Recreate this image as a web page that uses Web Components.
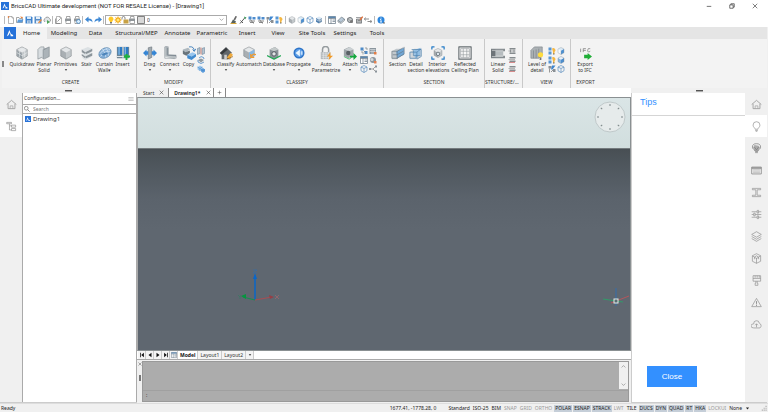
<!DOCTYPE html>
<html lang="en">
<head>
<meta charset="utf-8">
<title>BricsCAD Ultimate development</title>
<style>
html,body{margin:0;height:100%;background:#fff}
body{font-family:"Noto Sans","Open Sans",sans-serif;font-size:5px;line-height:7px;color:#333;overflow:hidden}
</style>
</head>
<body>
<cad-app></cad-app>
<script>
const box = (t, l, r) => `<path fill="${t}" d="M8 1 14 4 8 7.500 2 4z"/><path fill="${l}" d="M2 4 8 7.500V15L2 11.500z"/><path fill="${r}" d="M14 4 8 7.500V15l6-3.500z"/>`;
const grayBox = box('#e4e7e9', '#a9afb3', '#c3c8cb') + '<path fill="none" stroke="#777e83" stroke-width=".6" d="M8 1 14 4v7.500L8 15l-6-3.500V4z"/>';
const ln = (d, c = '#909090', w = 1) => `<path fill="none" stroke="${c}" stroke-width="${w}" stroke-linejoin="round" d="${d}"/>`;
const fl = (d, c) => `<path fill="${c}" d="${d}"/>`;
const sheet = fl('M3 1h7l3 3v11H3z', '#fff') + ln('M3 1h7l3 3v11H3zM10 1v3h3', '#888', 1.2);
const printer = ln('M5 5V1h7v4M4 11h9v4H4z', '#777', 1.3) + fl('M2 5h12v6H2z', '#909599') + fl('M5 10h7v4H5z', '#fff');
const bulb = fl('M8 1a5 5 0 0 0-3 9l1 2h4l1-2a5 5 0 0 0-3-9z', '#ffc928') + fl('M6 12h4v3H6z', '#777');
const house = fl('M1 8 8 1l7 7-2 1v6H3V9z', '#62676b') + fl('M1 8 8 2l2 2-7 6z', '#363a3d') + fl('M6 10h3v5H6z', '#ccc');
const icons = {
  logo: fl('M0 0h16v16H0z', '#2672d9') + fl('M3 13 7 3l3 8-2-1-1-3-1 4zM9 9l4 2v2H9z', '#fff'),
  new: sheet + fl('M1 2l2-2 2 2-2 2z', '#e9782f'),
  open: ln('M1 13V3h5l1 2h6v8z', '#777', 1.3) + fl('M4 7h11l-3 6H2z', '#599bdc') + fl('M8 1l6 1-2 3z', '#e87527'),
  save: fl('M1 1h12l2 2v12H1z', '#3f83ce') + fl('M4 1h8v5H4zM4 9h8v6H4z', '#d9e9f8') + ln('M5 11h6M5 13h6', '#4e80b7'),
  saveas: fl('M1 1h12l2 2v12H1z', '#568dc8') + fl('M4 1h8v5H4zM4 9h8v6H4z', '#e4edf7') + fl('M8 13l6-7 2 2-6 7z', '#e58b40'),
  cloud: fl('M4 12a4 4 0 0 1 0-7 5 5 0 0 1 9 0 4 4 0 0 1 0 7z', '#dfe4e8') + ln('M4 12a4 4 0 0 1 0-7 5 5 0 0 1 9 0 4 4 0 0 1 0 7', '#777', 1.3) + fl('M8 8l6 4-6 4z', '#4ca457'),
  layout: sheet + ln('M1 5v10h9M5 11l6-6', '#777', 1.4), print: printer, preview: printer + '<circle cx="11" cy="11" r="4" fill="#d7ecfb" stroke="#4683bb" stroke-width="1.5"/>',
  undo: fl('M0 7l7-6v4c6 0 8 3 8 8-2-3-4-4-8-4v4z', '#3e88d4'), redo: fl('M16 7 9 1v4c-6 0-8 3-8 8 2-3 4-4 8-4v4z', '#3e88d4'),
  bulb, sun: fl('M8 0l2 4 4-2-2 4 4 2-4 2 2 4-4-2-2 4-2-4-4 2 2-4-4-2 4-2-2-4 4 2z', '#f5ac18') + '<circle cx="8" cy="8" r="3" fill="#ffe67a"/>',
  lock: ln('M2 7V4a3 3 0 0 1 6 0v3', '#777', 1.7) + fl('M5 7h10v8H5z', '#c7a145'),
  swatch: fl('M1 1h14v14H1z', '#d8d8d8') + ln('M1 1h14v14H1z', '#555', 1.4),
  brush: fl('M11 0l3 1-4 8-3-2z', '#686868') + fl('M2 14 6 7l6 4-2 4z', '#56625f') + ln('M1 15h12', '#d3a336', 2),
  pen: ln('M2 15 13 2M3 9l5 5', '#555', 2) + fl('M10 1l5 2-3 4z', '#46a364'),
  filter: fl('M1 1h6v6H1zM9 2h6v5H9z', '#4d8cce') + ln('M2 10h12M4 13h8M5 7l6 8', '#777', 1.7),
  filter2: fl('M1 2h6v5H1zM10 8h5v6h-5z', '#898f94') + fl('M8 1h7L9 9H6z', '#3e86d0') + ln('M3 7v8M6 14l4-4', '#787878', 1.5),
  bulbs: fl('M1 1h6v6H1zM1 9h6v6H1z', '#5796d3') + fl('M8 3a4 4 0 1 1 5 7v4h-3v-4z', '#f5b742') + ln('M10 14h3', '#6b6b6b', 2),
  face: grayBox, vbox: box('#dcecf8', '#f8fbfd', '#4a90d4') + ln('M8 1 14 4v7.500L8 15l-6-3.500V4zM8 7v8', '#8b99a4', .8),
  bbox: box('#e9f2fa', '#87b5df', '#4b8dce') + ln('M8 1 14 4v7.500L8 15l-6-3.500V4z', '#768696', .8),
  wbox: ln('M8 1 14 4v7.500L8 15l-6-3.500V4zM2 4l6 3 6-3M8 7v8', '#5186bb', 1.3), darkbox: box('#dae8f4', '#4f7eae', '#7897b4') + ln('M2 7l6 3 6-3', '#fff'),
  grid: fl('M1 1h14v14H1z', '#fff') + ln('M1 1h14v14H1zM1 5h14M6 5v10M9 8h5M9 11h5', '#596b7a', 1.3) + fl('M1 1h14v3H1z', '#5b86ae'),
  erase: fl('M2 9l7-7 6 4-7 7z', '#b9c9d8') + ln('M2 9l7-7 6 4-7 7zM2 9v3l6 3 7-6V6', '#606b75', 1.2),
  gear: '<circle cx="8" cy="8" r="5" fill="#c7cacc" stroke="#6f757a" stroke-width="2"/><circle cx="11" cy="11" r="3" fill="#777"/>' + ln('M2 4l11 9', '#777'),
  tool: fl('M2 6h12v9H2z', '#b4b7b9') + ln('M2 3h12M3 6h10v8H3zM6 9h5', '#6d7174', 1.3) + fl('M9 6l6-6 1 3-5 6z', '#dc7240'),
  swap: ln('M1 6h9M3 3 1 6l2 3M7 11h8M13 8l2 3-2 3', '#727272', 1.6), help: '<circle cx="8" cy="8" r="7" fill="#2d86dc"/><circle cx="8" cy="4" r="1.200" fill="#fff"/>' + ln('M6 7h2v5M6 12h4', '#fff', 1.6) + fl('M12 13h4l-2 3z', '#333'),
  quick: grayBox + fl('M3 6l5 3v5l-5-3z', '#919ba2') + ln('M2 7.500 8 11l6-3.500M5 2.500 11 6v7M11 2.500 5 6v7', '#e9edef', .7),
  planar: fl('M1 4l3-3h4l-1 12-6 2z', '#d8dde0') + fl('M7 3l7-2v11l-7 3z', '#abb3b8') + ln('M1 4l3-3h4v3l6-3v11l-6 3-3-2-4 2zM7 4v10', '#737d83', .6),
  prim: grayBox,
  stair: fl('M2 4l7-3 5 2-8 4zM2 9l7-3 5 2-8 4zM2 13l6-2 6 1-8 4z', '#dce1e4') + fl('M2 4l4 3v2L2 7zM2 9l4 3v2l-4-3zM6 7l8-4v3l-7 3zM6 12l8-4v3l-7 3z', '#8c959b'),
  curtain: '<ellipse cx="8" cy="8" rx="7.500" ry="5.500" transform="rotate(-32 8 8)" fill="#82aed8" stroke="#5983a9" stroke-width=".7"/>' + ln('M2 9q6-8 12-5M3 12q5-7 11-6M5 3q3 4 4 10M9 2q3 4 3 9', '#dbeaf6', .8) + fl('M4 10q4-4 8-2l-5 3z', '#4c84ba'),
  insert: fl('M1 1h14v13H1z', '#718693') + fl('M2 1h5v9H2zM9 1h5v9H9z', '#2d7bc3') + fl('M3 1h1v9H3zM10 1h1v9h-1z', '#b8d6ec') + ln('M8 1v14M1 12h13', '#e1e7eb', 1.2) + ln('M12 9v7M9 12h7', '#19b53d', 2.2),
  drag: fl('M6 2l4-1v12l-4 2z', '#9fa8ae') + ln('M6 2l4-1v12l-4 2z', '#677079', .7) + fl('M0 8l4-4v2h2v4H4v2zM16 8l-4-4v2h-2v4h2v2z', '#3585d4'),
  connect: fl('M2 1l3-1v10l10 2-2 3-11-3z', '#c1c7ca') + fl('M4 1l2 1v8l-2 1zM5 10h10v2L5 11z', '#8c969d') + ln('M2 1l3-1 1 1v9l9 1v3H2z', '#79838a', .6),
  copy: fl('M1 4l6-2 2 2-5 4-3-1z', '#aeb8be') + fl('M1 5l3 2 5-2v3l-4 3-4-2z', '#69747b') + fl('M6 10l6-3 4 2-5 3z', '#98c6ef') + fl('M6 10l5 2v4l-5-2zM11 12l5-3v3l-5 4z', '#418bcf') + ln('M8 1q6-1 6 5M12 4l2 2 2-3', '#3478b9', 1),
  classify: house + fl('M9 13l4-5 3 2-4 5z', '#f0aa3b') + ln('M9 15l7-3', '#986420', .8),
  auto: grayBox + fl('M8 7.500 14 4v7L8 15z', '#86b8e4') + ln('M11 12q1-4 5-2M10 9v4h4', '#f09a2f', 1.4),
  database: fl('M3 4l6-3 4 3v8l-5 3-5-3z', '#8a9297') + fl('M3 4l6-3 4 3-5 2z', '#c4caca') + '<circle cx="8" cy="9" r="2.500" fill="#e1e4e5" stroke="#495158"/>' + ln('M0 11l8 4 8-4', '#25a756', 1.3),
  propagate: '<circle cx="8" cy="8" r="6.300" fill="#2d74c8"/><circle cx="8" cy="8" r="4.500" fill="#5f9fe8"/>' + fl('M4 8l5-4v8z', '#eaf6ff') + fl('M10 6h2v4h-2z', '#c5defa'),
  param: ln('M4 7V4a3 3 0 0 1 7 0v3', '#969c9f', 1.7) + fl('M2 7h11v8H2z', '#b5babd') + ln('M3 9h9M3 11h9M3 13h9M5 7v8M8 7v8M11 7v8', '#ebeded', .6) + fl('M13 7 9 12h3l-1 4 5-5h-3z', '#f39a25'),
  attach: fl('M1 4l6-3 5 3v7l-6 3-5-3z', '#9da4a8') + fl('M2 4l6-3 4 3-5 2z', '#ccd1d4') + '<circle cx="6" cy="8" r="2.500" fill="#596165"/>' + ln('M1 12l6 3 3-2', '#4cba6e', 1.1) + fl('M8 11h4V8l4 4-4 4v-3H8z', '#13a73c'),
  section: fl('M1 6l5-3h8l-3 4v5l-5 3H1z', '#c1c8cd') + fl('M6 6l9-4v8l-8 4z', '#70a7d7') + ln('M1 6h6l7-4M1 6v8h6l8-5V1M7 6v9M2 10h5l7-4', '#64717b', .7),
  detail: fl('M1 7l5-4h8v8l-4 4H1z', '#d1d6da') + fl('M5 5l8-3v8l-6 4z', '#92bee3') + ln('M1 7h8l5-4M1 7v7h8V7M3 4h11v8l-5 3M5 5v6h8', '#4e82af', .8),
  interior: '<g transform="translate(2 2) scale(.75)">' + grayBox + '</g><circle cx="8" cy="9" r="2" fill="#dce6ec" stroke="#69747b"/>' + ln('M1 4V1h3M12 1h3v3M1 12v3h3M12 15h3v-3', '#267cc7', 1.4),
  ceiling: fl('M1 1h14v14H1z', '#f8f8f8') + ln('M1 1h14v14H1z', '#666d71', 1.3) + ln('M3 3h10v10H3zM6 3v10M10 3v10M3 6h10M3 10h10', '#91979a', .7),
  linear: fl('M0 3h16v3H0zM0 11h16v3H0z', '#858c90') + fl('M2 6h12v5H2z', '#b6bcbf') + fl('M0 4h5v9H0z', '#6d7479') + ln('M1 5h13M1 12h13', '#e6e9eb', .7),
  ibeam: fl('M3 2h12v3H3zM3 11h12v3H3z', '#858b8e') + ln('M1 8h14M5 5v6M12 5v6', '#6d7376', 1.3),
  redbeam: fl('M3 2h12v3H3zM3 9h12v3H3z', '#858b8e') + ln('M2 13h12', '#cc6a6a', 1.5) + ln('M1 7h13', '#777'),
  lod: fl('M1 5l4-4h9v9l-4 4H1z', '#abb1b4') + ln('M1 5l4-4h9v9l-4 4H1zM4 5v9M7 4v10M10 3v10', '#777e83', .7) + '<circle cx="12" cy="10" r="3" fill="#ffdc3d"/>' + ln('M12 13v3', '#777', 2),
  ifc: ln('M3 3v4M6 7V3h3M6 5h3M14 3q-3-1-3 2t3 1', '#777', .8) + fl('M7 10h4V8l5 4-5 4v-2H7z', '#20ae37'),
  small: fl('M1 1h6v6H1zM9 8h6v6H9z', '#4d8ac7') + ln('M10 2h4v4M2 10h4v5M7 7l4 4', '#6f767a', 1.3),
  table: fl('M1 2h13v12H1z', '#8a959d') + ln('M2 5h11M6 5v9M10 5v9M2 9h11', '#eef1f3') + fl('M10 10h5v5h-5z', '#e27d45'),
  orange: '<circle cx="8" cy="8" r="6" fill="#8c969d"/><circle cx="6" cy="7" r="3" fill="#d5dadd"/>' + fl('M10 10h5v5h-5z', '#e38251'),
  nodes: ln('M3 8h5l5-5M8 8l5 5', '#777', 1.3) + fl('M0 6h4v4H0zM12 1h4v4h-4zM12 11h4v4h-4z', '#8a9299'),
  pair: fl('M1 3l5-2v12l-5 2zM10 3l5-2v12l-5 2z', '#b6c4d0') + ln('M1 3l5-2v12l-5 2zM10 3l5-2v12l-5 2z', '#5b7993') + ln('M8 1v14', '#d36b59', 1.5),
  rotate: fl('M2 8l6-3 6 3-6 5z', '#90999f') + ln('M2 8v4l6 3 6-3M4 4q4-5 9-1l1 3', '#367ec1', 1.5),
  blueCopy: fl('M1 4l5-3 5 3v5l-5 3-5-3z', '#9bc7ee') + fl('M8 9l4-3 4 3v4l-4 3-4-3z', '#5c9cdb') + ln('M1 4l5 3 5-3M6 7v5M8 9l4 2 4-2', '#377abc'),
  home: ln('M1 8l7-6 7 6M3 7v7h10V7', '#a0a0a0', 1.3) + ln('M6 14v-4h4v4', '#a0a0a0', 1),
  tree: ln('M1 2h7v2H1zM5 4v3h3M5 7v6h3M8 6h6v3H8zM8 11h6v3H8z'),
  tipbulb: ln('M6 12c0-2-3-3-3-6a5 5 0 0 1 10 0c0 3-3 4-3 6zM6 14h4M7 15h2'), darkbulb: fl('M6 12 3 7l2-4 6 1 2 3-4 6z', '#aaa') + ln('M6 12c0-2-4-3-4-6a6 5 0 0 1 12 0c0 3-4 4-4 6zM6 14h4M5 6l3 4 3-4', '#777'),
  stack: fl('M1 3h14v3H1z', '#a5a5a5') + ln('M1 3h14v10H1z', '#8a8a8a', 1.2) + ln('M3 7h10M3 9h10M3 11h10', '#a5a5a5', .8),
  beam: ln('M2 2h12v2H9v8h5v2H2v-2h5V4H2z'),
  sliders: ln('M1 4h8M11 4h4M9 2v4h2V2zM1 8h3M6 8h9M4 6v4h2V6zM1 12h8M11 12h4M9 10v4h2v-4z'),
  layers: ln('M8 1l7 4-7 4-7-4zM1 8l7 4 7-4M1 11l7 4 7-4'), cube: ln('M8 1l6 3v8l-6 3-6-3V4zM2 4l3 2v3M14 4l-3 2v3M8 7v8M5 6l3-2 3 2-3 2z'),
  paint: ln('M3 1h11v8H3zM3 5h11M6 1v3M9 1v3M12 1v3M7 9v3H6v3h4v-3H9V9'), warning: ln('M8 2l7 12H1z') + ln('M8 6v4M8 11v2', '#909090', 1.4),
  upcloud: ln('M4 13a4 3 0 0 1 0-6 4 4 0 0 1 8-1 4 4 0 0 1 1 7zM8 12V7M6 9l2-2 2 2'),
  search: '<circle cx="6" cy="6" r="5" fill="none" stroke="#555" stroke-width="1.600"/>' + ln('M10 10l5 5', '#555', 1.8), list: ln('M1 4h14M1 8h14M1 12h14', '#999', 1.3),
  close: ln('M2 2l12 12M14 2 2 14', '#444', 1.8), plus: ln('M8 2v12M2 8h12', '#444', 1.5), min: ln('M2 9h12', '#333', 1.8), max: ln('M2 5h9v9H2zM5 5V2h9v9h-3', '#333', 1.8),
  first: ln('M4 2v12', '#111', 2) + fl('M13 2v12L6 8z', '#111'), prev: fl('M12 2v12L4 8z', '#111'), next: fl('M4 2v12l8-6z', '#111'), last: ln('M12 2v12', '#111', 2) + fl('M3 2v12l7-6z', '#111'),
  down: fl('M3 5h10l-5 6z', '#222'), chevD: ln('M2 5l6 6 6-6', '#777', 1.8), chevU: ln('M2 11l6-6 6 6', '#777', 1.8),
  size: fl('M12 2h3v3h-3zM12 7h3v3h-3zM7 7h3v3H7zM12 12h3v3h-3zM7 12h3v3H7zM2 12h3v3H2z', '#aaa')
};
const define = (name, css, html) => customElements.define(name, class extends HTMLElement {
  connectedCallback() {
    if (this.shadowRoot) return;
    const root = this.attachShadow({mode: 'open'});
    root.innerHTML = `<style>*{box-sizing:border-box}button,a,input,select{font:inherit;color:inherit;margin:0;padding:0;border:0;background:none;text-decoration:none;border-radius:0}button{display:flex;align-items:center;justify-content:center}${css}</style>${typeof html === 'function' ? html(this) : html}`;
  }
});
const ic = (n, s = 8) => `<cad-icon name="${n}" style="--s:${s}px"></cad-icon>`;

define('cad-icon', ':host{display:inline-block;flex:none;width:var(--s,8px);height:var(--s,8px)}svg{display:block;width:100%;height:100%}',
  e => `<svg viewBox="0 0 16 16" aria-hidden="true">${icons[e.getAttribute('name')]}</svg>`);

define('title-bar', `:host{display:flex;align-items:center;height:12px;padding:0 10px 0 1px;gap:2px;font:6px/8px Roboto,sans-serif;color:#222;background:#fff}
  span{flex:1;white-space:nowrap}nav{display:flex;gap:17px}`,
  `${ic('logo')}<span>BricsCAD Ultimate development (NOT FOR RESALE License) - [Drawing1]</span>
   <nav><button aria-label="Minimize">${ic('min', 6)}</button><button aria-label="Restore">${ic('max', 6)}</button><button aria-label="Close window">${ic('close', 6)}</button></nav>`);

const tools = a => a.map(n => `<button aria-label="${n}">${ic(n)}</button>`).join('');
define('quick-bar', `:host{display:flex;align-items:center;height:15px;padding-left:3px;background:#fff}
  i{width:1px;height:8px;background:#bbb;margin:0 1px}i:first-child{background:#666;margin:0 4px 0 0}.layer~i{margin-left:2px}button{width:9px;height:9px}
  .layer{display:flex;align-items:center;width:122px;height:10px;border:1px solid #aaa;padding:0 1px;margin-right:2px}
  .layer cad-icon{margin-right:-1px}.layer cad-icon:nth-of-type(5){margin-left:2px}
  select{flex:1;appearance:none;height:8px;line-height:8px;padding-left:3px}.layer .arrow{margin:0 1px}`,
  `<i></i>${tools(['new', 'open', 'save', 'saveas', 'cloud'])}<i></i>${tools(['layout', 'print', 'preview'])}<i></i>${tools(['undo', 'redo'])}<i></i>
   <div class="layer">${ic('bulb')}${ic('sun')}${ic('lock')}${ic('print')}${ic('swatch')}<select aria-label="Layer"><option>0</option></select><cad-icon class="arrow" name="chevD" style="--s:5px"></cad-icon></div>
   ${tools(['brush', 'pen', 'filter', 'filter', 'filter2', 'bulbs'])}<i></i>${tools(['face', 'vbox', 'wbox', 'darkbox'])}<i></i>${tools(['grid', 'erase', 'gear', 'tool', 'swap'])}<i></i>${tools(['help'])}`);

const menus = [['Home', 31], ['Modeling', 34], ['Data', 29], ['Structural/MEP', 53], ['Annotate', 29], ['Parametric', 40], ['Insert', 30], ['View', 32], ['Site Tools', 36], ['Settings', 30], ['Tools', 34]];
define('menu-tabs', `:host{display:flex;align-items:stretch;height:12px;margin:0 1px 0 4px;background:#e5e5e5;font-size:6px;line-height:12px;color:#222}
  button{white-space:nowrap}.home{background:#f3f3f3}.app{width:12px;background:#2672d9}`,
  `<button class="app" aria-label="Application menu">${ic('logo', 10)}</button>` + menus.map(([m, w], i) => `<button class="${i ? '' : 'home'}" style="width:${w}px">${m}</button>`).join(''));

define('ribbon-button', `:host{display:block;flex:none;width:var(--w)}button{width:100%;flex-direction:column;justify-content:flex-start;line-height:6px;white-space:nowrap;gap:1px}span{display:block;text-align:center}`,
  e => `<button>${ic(e.getAttribute('icon'), 14)}<span><slot></slot></span>${e.hasAttribute('menu') ? ic('down', 4) : ''}</button>`);
define('ribbon-group', `:host{display:flex;flex:none;flex-direction:column;width:var(--w);border-right:1px solid #c9c9c9;padding:7px 4px 2px 4px}
  :host(:last-child){border:0}div{display:flex;flex:1}footer{text-align:center;line-height:8px;white-space:nowrap;margin:0 -4px;overflow:hidden;text-overflow:ellipsis}`,
  e => `<div><slot></slot></div><footer>${e.getAttribute('label')}</footer>`);
define('ribbon-grid', ':host{display:grid;grid-template-columns:repeat(var(--n,1),9px);grid-auto-rows:9px;align-content:start}button{width:9px;height:9px}',
  e => tools(e.getAttribute('icons').split(' ')));

const groups = [
  ['CREATE', 133, [['quick', 26, 'Quickdraw'], ['planar', 18, 'Planar<br>Solid'], ['prim', 25, 'Primitives', 1], ['stair', 17, 'Stair'], ['curtain', 19, 'Curtain<br>Wall▾'], ['insert', 17, 'Insert']]],
  ['MODIFY', 74, [['drag', 17, 'Drag', 1], ['connect', 23, 'Connect', 1], ['copy', 15, 'Copy']], 'pair rotate blueCopy', 1],
  ['CLASSIFY', 173, [['classify', 21, 'Classify', 1], ['auto', 26, 'Automatch'], ['database', 24, 'Database', 1], ['propagate', 25, 'Propagate', 1], ['param', 30, 'Auto<br>Parametrize'], ['attach', 18, 'Attach', 1]], 'small table grid orange wbox nodes', 2],
  ['SECTION', 101, [['section', 19, 'Section'], ['detail', 18, 'Detail<br>section'], ['interior', 25, 'Interior<br>elevations'], ['ceiling', 30, 'Reflected<br>Ceiling Plan']]],
  ['STRUCTURE/H...', 38, [['linear', 18, 'Linear<br>Solid']], 'ibeam redbeam redbeam', 1],
  ['VIEW', 48, [['lod', 20, 'Level of<br>detail']], 'bulbs vbox bulbs bbox filter2 wbox', 2],
  ['EXPORT', 29, [['ifc', 20, 'Export<br>to IFC']]]
];
define('cad-ribbon', ':host{display:flex;align-items:stretch;height:49px;margin-right:1px;background:#f3f3f3;border-left:2px solid #f0f0f0}.grip{align-self:center;width:2px;height:6px;background:#888}.grip+ribbon-group{padding-left:5px}',
  '<div class="grip"></div>' + groups.map(([l, w, b, g, n]) => `<ribbon-group label="${l}" style="--w:${w}px">${b.map(([i, bw, t, m]) => `<ribbon-button icon="${i}" ${m ? 'menu' : ''} style="--w:${bw}px">${t}</ribbon-button>`).join('')}${g ? `<ribbon-grid icons="${g}" style="--n:${n}"></ribbon-grid>` : ''}</ribbon-group>`).join(''));

define('side-rail', ':host{display:block;background:#f0f0f0}button{width:100%;height:22px}button.on{background:#fff}',
  e => e.getAttribute('icons').split(' ').map((n, i) => `<button class="${i === 1 ? 'on' : ''}" aria-label="${n}">${ic(n, 11)}</button>`).join(''));
define('dock-panel', `:host{display:flex;flex-direction:column;min-height:0;background:#f0f0f0;border-bottom:1px solid #ccc}
  .grip{height:5px;display:flex;align-items:center;justify-content:center}.grip i{width:7px;height:2px;border-top:1px solid #555;border-bottom:1px solid #aaa}
  main{display:flex;flex:1;min-height:0}`,
  '<div class="grip"><i></i></div><main><slot></slot></main>');
define('structure-panel', `:host{display:flex;flex:1;flex-direction:column;background:#fff;border-left:1px solid #aaa;border-right:1px solid #aaa;font-size:5px}
  header{display:flex;align-items:center;justify-content:space-between;height:11px;padding:0 2px 0 1px}
  label{display:flex;align-items:center;height:10px;border:1px solid #aaa;border-width:1px 0;padding:0 1px;gap:3px}input{flex:1;min-width:0;outline:0}input::placeholder{color:#777}
  a{display:flex;align-items:center;gap:2px;padding:1px 2px;font-size:6px;line-height:8px;color:#333}`,
  `<header><span>Configuration...</span><button aria-label="Panel menu">${ic('list', 6)}</button></header><label>${ic('search', 6)}<input type="search" placeholder="Search" aria-label="Search"></label><a href="#drawing">${ic('logo', 6)}Drawing1</a>`);
define('tips-panel', `:host{display:flex;flex:1;flex-direction:column;background:#fff;border-left:1px solid #ccc;font-family:"Liberation Sans",sans-serif}
  h2{margin:0;padding:0 8px;height:23px;font-size:9px;font-weight:400;line-height:19px;color:#3390ff;border-bottom:1px solid #d5d5d5}
  button{margin:auto 0 15px 15px;width:50px;height:21px;background:#3390ff;color:#fff;font-size:8px;line-height:10px}`,
  '<h2>Tips</h2><button>Close</button>');

define('doc-tabs', `:host{display:flex;height:9px;background:#fff;font-size:5px;line-height:8px}div{display:flex;align-items:center;gap:5px;padding:0 4px 0 6px;background:#f0f0f0;border-right:1px solid #888}
  div.on{background:#fff;color:#111;font-weight:600;padding:0 2px 0 5px;gap:6px}.add{width:12px;border-right:1px solid #888}`,
  `<div><button>Start</button><button aria-label="Close Start">${ic('close', 5)}</button></div><div class="on"><button>Drawing1*</button><button aria-label="Close Drawing1">${ic('close', 5)}</button></div><button class="add" aria-label="New tab">${ic('plus', 5)}</button>`);
const dots = [0, 45, 90, 135, 180, 225, 270, 315].map(a => `<rect x="15.500" y="3" width="1" height="2" fill="#7d8889" transform="rotate(${a} 16 16)"/>`).join('');
define('view-port', `:host{display:block;position:relative;flex:1;min-height:0;border:1px solid #8a9092;border-left-color:#aaa;background:linear-gradient(#dae5e6,#d1dede) 0 0/100% 50px no-repeat,linear-gradient(#747b7e,#747b7e) 0 50px/100% 1px no-repeat,linear-gradient(#484f54,#50585f 20px,#5b636c 50px,#5f6770 80px) 0 51px no-repeat}
  svg{position:absolute}.cube{right:4px;top:3px}.ucs{left:100px;top:171px}.cursor{right:1px;top:189px}`,
  `<svg class="cube" width="32" height="32"><circle cx="16" cy="16" r="15" fill="#e6ebeb" stroke="#c0c9ca"/>${dots}</svg>
   <svg class="ucs" width="42" height="34">${ln('M17 31V8', '#0866c9', 1.5)}${fl('M15 10l2-6 2 6z', '#0866c9')}${ln('M15 1h4l-4 3h4', '#376fa7', .7)}${ln('M17 31 5 28', '#168e50', 1.2)}${fl('M8 30 3 27l5-2z', '#07953f')}${ln('M0 26l2 2 1-2M2 28v2', '#357c61', .7)}${ln('M17 31l17-3', '#a64e54', 1.2)}${fl('M31 26l5 2-4 2z', '#963e45')}${ln('M37 26l4 4M41 26l-4 4', '#a6666b', .7)}</svg>
   <svg class="cursor" width="26" height="26">${ln('M13 1v18', '#346fac')}${ln('M0 12l20 3', '#329b69')}${ln('M8 16l18-7', '#b4565c')}<rect x="11" y="12" width="4" height="4" fill="#596b70" stroke="#e1ede9"/></svg>`);
define('layout-tabs', ':host{display:flex;height:9px;background:#fff;border-bottom:1px solid #aaa;font-size:5px;line-height:8px;padding-left:1px}button{border-right:1px solid #ccc;width:8px;background:#f4f4f4}button.t{width:auto;padding:0 2px}button.on{font-weight:700;background:#fff;color:#111}',
  ['first', 'prev', 'next', 'last', 'grid'].map(n => `<button aria-label="${n}">${ic(n, 6)}</button>`).join('') + `<button class="t on">Model</button><button class="t">Layout1</button><button class="t">Layout2</button><button aria-label="More layouts">${ic('down', 4)}</button>`);
define('command-line', `:host{display:flex;height:43px;padding:1px 2px 1px 0;background:#f0f0f0}aside{display:flex;flex-direction:column;align-items:center;width:5px;gap:9px;padding-top:1px}aside i{width:2px;height:6px;border:1px solid #777;border-width:0 1px}
  main{display:flex;flex:1;flex-direction:column;background:#acacac;border:1px solid #999}.out{display:flex;justify-content:flex-end;flex:1}.bar{display:flex;flex-direction:column;justify-content:space-between;width:9px;margin-bottom:1px;background:#f0f0f0;padding:2px 0}
  .bar button{width:9px}label{display:flex;height:11px;border-top:1px solid #a0a0a0;line-height:9px;padding-left:3px;color:#222}input{flex:1}`,
  `<aside><button aria-label="Close command line">${ic('close', 4)}</button><i></i></aside><main><div class="out"><div class="bar"><button aria-label="Scroll up">${ic('chevU', 5)}</button><button aria-label="Scroll down">${ic('chevD', 5)}</button></div></div><label>:<input aria-label="Command"></label></main>`);
define('status-bar', ':host{display:flex;align-items:center;height:9px;background:#f0f0f0;border-top:1px solid #ddd;padding:0 1px;line-height:7px;color:#222}span{flex:1}output{margin-right:11px}nav{display:flex;gap:1px;margin-right:10px}button{padding:0 1px;height:7px;white-space:nowrap}.off{color:#999}.on{background:#c5ced8}',
  '<span>Ready</span><output>1677.41, -1778.28, 0</output><nav>' + 'Standard ISO-25 BIM -SNAP -GRID -ORTHO +POLAR +ESNAP +STRACK -LWT TILE +DUCS +DYN +QUAD +RT +HKA -LOCKUI None'.split(' ').map(t => `<button class="${t[0] === '-' ? 'off' : t[0] === '+' ? 'on' : ''}">${t.replace(/^[-+]/, '')}</button>`).join('') + `<button aria-label="Status menu">${ic('down', 5)}</button></nav>${ic('size', 6)}`);
define('cad-app', ':host{display:flex;flex-direction:column;min-height:100vh;background:#f0f0f0}main{display:grid;flex:1;grid-template-columns:137px minmax(0,1fr) 136px;padding-right:1px}section{display:flex;flex-direction:column}side-rail{flex:none;width:22px}',
  `<title-bar></title-bar><quick-bar></quick-bar><menu-tabs></menu-tabs><cad-ribbon></cad-ribbon>
   <main><dock-panel><side-rail icons="home tree"></side-rail><structure-panel></structure-panel></dock-panel>
   <section><doc-tabs></doc-tabs><view-port></view-port><layout-tabs></layout-tabs><command-line></command-line></section>
   <dock-panel><tips-panel></tips-panel><side-rail icons="home tipbulb darkbulb stack beam sliders layers cube paint warning upcloud"></side-rail></dock-panel></main><status-bar></status-bar>`);
</script>
</body>
</html>
